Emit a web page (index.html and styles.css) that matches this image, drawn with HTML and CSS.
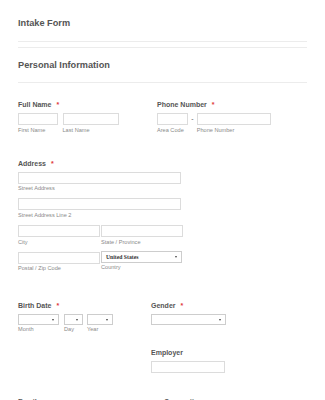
FILE: index.html
```html
<!DOCTYPE html>
<html>
<head>
<meta charset="utf-8">
<link rel="stylesheet" href="styles.css">
</head>
<body>
<div class="form">
  <h1 class="title">Intake Form</h1>
  <hr class="rule rule-a">
  <hr class="rule rule-b">
  <h2 class="section">Personal Information</h2>
  <hr class="rule rule-c">

  <div class="row row-name">
    <div class="field">
      <div class="label">Full Name<span class="req">*</span></div>
      <div class="inline gap-name">
        <div class="sub"><input class="box w-first"><span class="sublabel">First Name</span></div>
        <div class="sub"><input class="box w-last"><span class="sublabel">Last Name</span></div>
      </div>
    </div>
    <div class="field">
      <div class="label">Phone Number<span class="req">*</span></div>
      <div class="inline">
        <div class="sub"><input class="box w-area"><span class="sublabel">Area Code</span></div>
        <span class="dash">-</span>
        <div class="sub"><input class="box w-phone"><span class="sublabel">Phone Number</span></div>
      </div>
    </div>
  </div>

  <div class="address">
    <div class="label">Address<span class="req">*</span></div>
    <div class="addr-grid">
      <div class="sub span2"><input class="box w-street"><span class="sublabel">Street Address</span></div>
      <div class="sub span2"><input class="box w-street"><span class="sublabel">Street Address Line 2</span></div>
      <div class="sub"><input class="box w-half"><span class="sublabel">City</span></div>
      <div class="sub"><input class="box w-half"><span class="sublabel">State / Province</span></div>
      <div class="sub"><input class="box w-half"><span class="sublabel">Postal / Zip Code</span></div>
      <div class="sub country"><div class="select w-country"><span class="sel-text">United States</span></div><span class="sublabel">Country</span></div>
    </div>
  </div>

  <div class="row row-birth">
    <div class="field">
      <div class="label">Birth Date<span class="req">*</span></div>
      <div class="inline">
        <div class="sub"><div class="select w-month"></div><span class="sublabel">Month</span></div>
        <div class="sub"><div class="select w-day"></div><span class="sublabel">Day</span></div>
        <div class="sub"><div class="select w-year"></div><span class="sublabel">Year</span></div>
      </div>
    </div>
    <div class="field">
      <div class="label">Gender<span class="req">*</span></div>
      <div class="select w-gender"></div>
    </div>
  </div>

  <div class="employer">
    <div class="label">Employer</div>
    <input class="box w-employer">
  </div>

  <div class="row row-last">
    <div class="label">Email</div>
    <div class="label">Occupation</div>
  </div>
</div>
</body>
</html>
```

FILE: styles.css
```css
html, body {
  margin: 0;
  padding: 0;
  background: #fff;
}
body {
  font-family: "Liberation Sans", Arial, sans-serif;
  color: #555;
}
.form {
  padding: 0 18px;
  width: 289px;
}
.title {
  margin: 0;
  padding-top: 18px;
  font-size: 9.2px;
  line-height: 11px;
  font-weight: bold;
  color: #555;
}
.rule {
  border: 0;
  border-top: 1px solid #ececec;
  height: 0;
  margin: 0;
}
.rule-a { margin-top: 12px; }
.rule-b { margin-top: 5px; }
.rule-c { margin-top: 11px; }
.section {
  margin: 0;
  padding-top: 11px;
  font-size: 9.2px;
  line-height: 12px;
  font-weight: bold;
  color: #555;
}
.label {
  font-size: 7px;
  line-height: 10px;
  font-weight: bold;
  color: #555;
}
.req {
  color: #e03a3a;
  margin-left: 5px;
}
.row {
  display: grid;
}
.row-name {
  grid-template-columns: 139px 1fr;
  padding-top: 17px;
}
.inline {
  display: flex;
  align-items: flex-start;
  margin-top: 3px;
}
.gap-name { gap: 4.5px; }
.sub {
  display: flex;
  flex-direction: column;
}
.box {
  display: block;
  box-sizing: border-box;
  height: 12px;
  margin: 0;
  padding: 0;
  border: 1px solid #dcdcdc;
  background: #fff;
}
.sublabel {
  font-size: 5.6px;
  line-height: 7px;
  margin-top: 1.5px;
  color: #8a8a8a;
  white-space: nowrap;
}
.dash {
  width: 8.7px;
  text-align: center;
  font-size: 7px;
  line-height: 12px;
  color: #555;
}
.w-first { width: 40px; }
.w-last { width: 56.5px; }
.w-area { width: 31px; }
.w-phone { width: 74px; }

.address {
  margin-top: 25px;
}
.addr-grid {
  margin-top: 3px;
  display: grid;
  grid-template-columns: 82px 82px;
  column-gap: 1px;
  row-gap: 6.3px;
}
.span2 { grid-column: span 2; }
.w-street { width: 163px; }
.w-half { width: 82px; }
.country { margin-top: -1px; }
.country .sublabel { margin-top: 1px; }

.select {
  position: relative;
  box-sizing: border-box;
  height: 11px;
  border: 1px solid #cdcdcd;
  background: #fff;
}
.select::after {
  content: "";
  position: absolute;
  right: 4px;
  top: 3.5px;
  border-left: 1.6px solid transparent;
  border-right: 1.6px solid transparent;
  border-top: 2.6px solid #444;
}
.w-country { width: 81px; height: 12px; }
.w-country::after { top: 4px; }
.sel-text {
  display: block;
  padding-left: 4px;
  font-family: "Liberation Serif", "Times New Roman", serif;
  font-weight: bold;
  font-size: 5.7px;
  line-height: 10px;
  color: #333;
}
.row-birth {
  grid-template-columns: 133px 1fr;
  margin-top: 28.7px;
}
.row-birth .inline .sub + .sub { margin-left: 5px; }
.row-birth .inline .sub:last-child { margin-left: 4px; }
.row-birth .sublabel { margin-top: 0.5px; }
.row-birth .field > .select { margin-top: 3px; }
.w-month { width: 41px; }
.w-day { width: 19px; }
.w-year { width: 26px; }
.w-gender { width: 75px; }

.employer {
  margin-top: 15.8px;
  margin-left: 133px;
}
.employer .box { margin-top: 3px; }
.w-employer { width: 74px; }

.row-last {
  grid-template-columns: 146px 1fr;
  margin-top: 23.5px;
}
```
